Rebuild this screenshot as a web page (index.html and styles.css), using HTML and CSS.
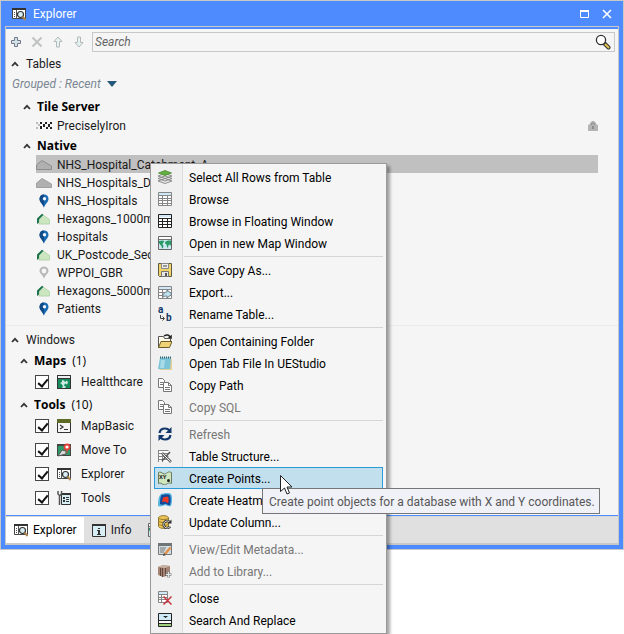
FILE: index.html
```html
<!DOCTYPE html>
<html lang="en">
  <head>
    <meta charset="UTF-8" />
    <meta name="viewport" content="width=device-width, initial-scale=1.0" />
    <title>Explorer</title>
    <link rel="stylesheet" href="styles.css">
  </head>
  <body>
    <!-- icons used more than once -->
    <svg class="sprite" aria-hidden="true">
      <symbol id="i-explorer" viewBox="0 0 14 14">
        <path d="M.5 1.500h13v10H.5z" fill="#fff" stroke="#444" />
        <path d="M0 1h14v2H0z" fill="#333" />
        <path d="M2 5.500h1M2 7.500h1M2 9.500h1M4.500 3v9" stroke="#555" />
        <circle cx="8.500" cy="7.500" r="3" fill="#d8eef5" stroke="#333" stroke-width="1.200" />
        <path d="M10.500 9.500l3 3.500" stroke="#a9824c" stroke-width="2" />
      </symbol>
      <symbol id="i-map" viewBox="0 0 14 14">
        <path d="M.5.500h13v13H.5z" fill="#cfe9f2" stroke="#666" />
        <path d="M1 1h12v2H1z" fill="#fff" />
        <path d="M1 3.500h12" stroke="#777" />
        <path d="M1 5l4-.5 1.500 1L5 7l-.5 1.500 1 1L5 12l-1 .5L3.500 10 2 8.500 1 7zM7.500 5.500L10 4.500h3v4L12 10l-.5-1.500-1 .5-.5 3-1-1-.5-2.500-1.500-1z" fill="#2b9a66" />
      </symbol>
      <symbol id="i-pin" viewBox="0 0 16 14">
        <path d="M8 .5C5 .5 3.500 2.500 3.500 5c0 3 3 4.500 4.500 8.500C9.500 9.500 12.500 8 12.500 5 12.500 2.500 11 .5 8 .5z" fill="#1c6bb5" />
        <path d="M8 .5C5 .5 3.500 2.500 3.500 5c0 3 3 4.500 4.500 8.500z" fill="#124a86" />
        <circle cx="8.500" cy="4.800" r="1.700" fill="#eef6ff" />
      </symbol>
      <symbol id="i-region" viewBox="0 0 16 14">
        <path d="M3 12V7l4-4 6.500 4.500V12z" fill="#cbe6c0" stroke="#b3d6aa" />
        <path d="M1 12V6.500L6 1.800l1.500 1L3 7.500v3z" fill="#1f7350" />
      </symbol>
      <symbol id="i-copy" viewBox="0 0 14 14">
        <path d="M.5.5h4l2 2v7h-6z" fill="#fff" stroke="#777" />
        <path d="M5.500 4.500h5l3 3v6h-8z" fill="#fff" stroke="#777" />
        <path d="M10.500 4.500v3h3M2 4.500h3M2 6.500h3M7 9.500h5M7 11.500h5" fill="none" stroke="#777" />
      </symbol>
      <symbol id="i-up" viewBox="0 0 8 6">
        <path d="M1 5l3-3.200L7 5" fill="none" stroke="#333" stroke-width="1.800" />
      </symbol>
    </svg>

    <div class="window">
      <header class="titlebar">
        <svg class="icon"><use href="#i-explorer" /></svg>
        <h1>Explorer</h1>
        <button class="win-btn" aria-label="Maximize">
          <svg width="10" height="10"><path d="M.5 1.500h8v7h-8z" fill="none" stroke="#fff" /><path d="M0 1h9v2H0z" fill="#fff" /></svg>
        </button>
        <button class="win-btn" aria-label="Close">
          <svg width="10" height="10"><path d="M1 1l8 8M9 1l-8 8" stroke="#fff" stroke-width="1.600" /></svg>
        </button>
      </header>

      <div class="frame">
        <main class="panel">
          <div class="toolbar">
            <button aria-label="Add"><svg width="12" height="12"><path d="M4.500 1.500h3v3h3v3h-3v3h-3v-3h-3v-3h3z" fill="#cfe3e6" stroke="#778" /></svg></button>
            <button aria-label="Remove"><svg width="12" height="12"><path d="M1.500 1.500l9 9M10.500 1.500l-9 9" stroke="#c0c2c2" stroke-width="2" /></svg></button>
            <button aria-label="Move up"><svg width="12" height="12"><path d="M6 1l4 4.500H7.500V11h-3V5.500H2z" fill="#e6f3f3" stroke="#b3b8b8" /></svg></button>
            <button aria-label="Move down"><svg width="12" height="12"><path d="M6 11l4-4.500H7.500V1h-3v5.500H2z" fill="#e6f3f3" stroke="#b3b8b8" /></svg></button>
            <div class="search">
              <input type="text" placeholder="Search" aria-label="Search" />
              <svg width="16" height="16" viewBox="0 0 16 16">
                <path d="M9.500 9.500l4 4" stroke="#333" stroke-width="4" stroke-linecap="round" />
                <path d="M10.500 10.500l3 3" stroke="#e4c34e" stroke-width="2" stroke-linecap="round" />
                <circle cx="6" cy="6" r="4.600" fill="#fff" stroke="#333" stroke-width="1.300" />
              </svg>
            </div>
          </div>

          <section class="tables">
            <h2 class="section-head"><svg class="up"><use href="#i-up" /></svg>Tables</h2>
            <button class="grouped">Grouped : Recent <svg width="10" height="6"><path d="M0 0h10L5 6z" fill="#24587c" /></svg></button>
            <h3 class="group-head"><svg class="up"><use href="#i-up" /></svg>Tile Server</h3>
            <ul class="rows">
              <li class="row">
                <svg class="icon-wide" viewBox="0 0 16 14">
                  <path d="M0 3h2v2H0zM2 5h2v2H2zM0 8h2v2H0z" fill="#bbb" />
                  <path d="M4 3h2v2H4zM4 7h2v3H4zM7 5h2v3H7zM9 3h2v2H9zM10 8h2v2h-2zM12 5h2v3h-2zM14 3h2v2h-2zM14 8h2v2h-2z" fill="#222" />
                </svg>
                PreciselyIron
                <svg class="lock" width="10" height="12"><path d="M0 5l2-1V3l2-2h2l2 2v1l2 1v6H0z" fill="#b4b4b4" /><path d="M3.500 5V4l1-1h1l1 1v1" fill="none" stroke="#888" /><path d="M4.500 6h1v3h-1z" fill="#666" /></svg>
              </li>
            </ul>
            <h3 class="group-head"><svg class="up"><use href="#i-up" /></svg>Native</h3>
            <ul class="rows">
              <li class="row selected"><svg class="icon-wide" viewBox="0 0 16 14"><path d="M.5 11.500V7L6 2.500 15.500 8v3.500z" fill="#b0b0b0" stroke="#8c8c8c" /></svg>NHS_Hospital_Catchment_A</li>
              <li class="row"><svg class="icon-wide" viewBox="0 0 16 14"><path d="M.5 11.500V7L6 2.500 15.500 8v3.500z" fill="#b0b0b0" stroke="#a0a0a0" /></svg>NHS_Hospitals_DT</li>
              <li class="row"><svg class="icon-wide"><use href="#i-pin" /></svg>NHS_Hospitals</li>
              <li class="row"><svg class="icon-wide"><use href="#i-region" /></svg>Hexagons_1000m</li>
              <li class="row"><svg class="icon-wide"><use href="#i-pin" /></svg>Hospitals</li>
              <li class="row"><svg class="icon-wide"><use href="#i-region" /></svg>UK_Postcode_Sect</li>
              <li class="row"><svg class="icon-wide" viewBox="0 0 16 14"><path d="M8 .500a4.500 4.500 0 0 0-4.500 4.500c0 2.500 3.500 3.500 4.500 8 1-4.500 4.500-5.500 4.500-8A4.500 4.500 0 0 0 8 .500z" fill="#b8b8b8" /><circle cx="8" cy="5" r="2.400" fill="#f5f5f5" /></svg>WPPOI_GBR</li>
              <li class="row"><svg class="icon-wide"><use href="#i-region" /></svg>Hexagons_5000m</li>
              <li class="row"><svg class="icon-wide"><use href="#i-pin" /></svg>Patients</li>
            </ul>
          </section>

          <section class="windows">
            <h2 class="section-head"><svg class="up"><use href="#i-up" /></svg>Windows</h2>
            <h3 class="window-head"><svg class="up"><use href="#i-up" /></svg>Maps <span>(1)</span></h3>
            <label class="check"><input type="checkbox" checked /><svg class="icon" viewBox="0 0 14 14"><path d="M0 0h14v14H0z" fill="#333" /><path d="M1 1h12v2H1z" fill="#eee" /><path d="M1 4h12v9H1z" fill="#178a5c" /><path d="M5 5l2 .5 1 1.500 2-1.500 1 2-1 2-2-1-1 2 2 1.500-1 1H5l1-2-1.500-2L3 8l2-1z" fill="#cdebe2" /></svg>Healtthcare</label>
            <h3 class="window-head"><svg class="up"><use href="#i-up" /></svg>Tools <span>(10)</span></h3>
            <label class="check"><input type="checkbox" checked /><svg class="icon" viewBox="0 0 14 14"><path d="M.5.5h13v13H.5z" fill="#f5f5f5" stroke="#333" /><path d="M0 0h14v4H0z" fill="#5d6b25" /><path d="M3 6l3 2-3 2M7 10.500h4" fill="none" stroke="#333" stroke-width="1.200" /></svg>MapBasic</label>
            <label class="check"><input type="checkbox" checked /><svg class="icon" viewBox="0 0 14 14"><path d="M0 1h14v12H0z" fill="#444" /><path d="M1 3h12v9H1z" fill="#2b9a66" /><path d="M1 13l4-6 4 1v3l-4 1z" fill="#d8d8d8" stroke="#555" /><circle cx="10" cy="4" r="2.500" fill="#fff" stroke="#e04038" stroke-width="1.800" /><path d="M10 7v3" stroke="#e04038" /></svg>Move To</label>
            <label class="check"><input type="checkbox" checked /><svg class="icon"><use href="#i-explorer" /></svg>Explorer</label>
            <label class="check"><input type="checkbox" checked /><svg class="icon" viewBox="0 0 14 14"><path d="M4.500 2.500h9v11h-9z" fill="#d8eef5" stroke="#333" /><path d="M5 2h9v2H5zM6 6h2v2H6zM6 9h2v2H6zM9 6h3v1H9zM9 8h3v1H9zM9 10h3v1H9z" fill="#333" /><path d="M1 0v3l1.500 1.500V14M4.500 0v3L3 4.500" fill="none" stroke="#555" stroke-width="1.500" /></svg>Tools</label>
            <div class="check"><input type="checkbox" aria-label="Info" /><svg class="icon" viewBox="0 0 14 14"><path d="M.5.5h13v13H.5z" fill="#fff" stroke="#333" /></svg></div>
          </section>
        </main>

        <nav class="tabs">
          <button class="tab active"><svg class="icon"><use href="#i-explorer" /></svg>Explorer</button>
          <button class="tab"><svg class="icon" viewBox="0 0 14 14"><path d="M.5 1.500h13v12H.5z" fill="#d8eef5" stroke="#333" /><path d="M0 1h14v2H0zM6 5h2v1H6zM5 7h3v4h1v1H5v-1h1V8H5z" fill="#333" /></svg>Info</button>
          <button class="tab" aria-label="Move To"><svg class="icon"><use href="#i-map" /></svg></button>
        </nav>
      </div>
    </div>

    <div class="menu" role="menu">
      <button role="menuitem">
        <svg class="icon" viewBox="0 0 14 14"><path d="M0 11l7-2.500 7 2.500-7 2.500zM0 8.500L7 6l7 2.500L7 11zM0 6l7-2.500L14 6 7 8.500z" fill="#e8e8e8" stroke="#777" stroke-width=".8" /><path d="M.5 3L7 .5 13.500 3 7 5.500z" fill="#64b044" stroke="#478a30" stroke-width=".8" /></svg>Select All Rows from Table</button>
      <button role="menuitem">
        <svg class="icon" viewBox="0 0 14 14"><path d="M.5.5h13v13H.5z" fill="#fff" /><path d="M1 1h12v2H1z" fill="#cfeaf6" /><path d="M.5.5h13v13H.5zM0 3.500h14M0 6.500h14M0 8.500h14M0 11.500h14M4.500 3v11M9.500 3v11" fill="none" stroke="#858585" /></svg>Browse</button>
      <button role="menuitem">
        <svg class="icon" viewBox="0 0 14 14"><path d="M.5.5h13v13H.5z" fill="#fff" /><path d="M1 1h12v2H1z" fill="#cfeaf6" /><path d="M.5.5h13v13H.5zM0 4.500h14M0 7.500h14M0 10.500h14M4.500 4v10M9.500 4v10" fill="none" stroke="#222" /></svg>Browse in Floating Window</button>
      <button role="menuitem"><svg class="icon"><use href="#i-map" /></svg>Open in new Map Window</button>
      <hr />
      <button role="menuitem">
        <svg class="icon" viewBox="0 0 14 14"><path d="M.5.5h13v13h-12l-1-1z" fill="#f0d468" stroke="#5f5a45" /><path d="M3.500.5h7v5h-7z" fill="#eee" stroke="#888" /><path d="M5 2h4v2H5z" fill="#999" /><path d="M3.500 8.500h7v5h-7z" fill="#e6e6e6" stroke="#777" /><path d="M7 10h2v3H7z" fill="#555" /></svg>Save Copy As...</button>
      <button role="menuitem">
        <svg class="icon" viewBox="0 0 14 14"><path d="M.5 1.500h13v12H.5z" fill="#fff" /><path d="M1 2h12v2H1z" fill="#cfeaf6" /><path d="M.5 1.500h13v12H.5zM0 4.500h14M0 7.500h14M0 10.500h14M4.500 4v10" fill="none" stroke="#858585" /><path d="M5 12c0-4 2-5 4-5V5l5 4-5 4v-2c-1 0-2 0-4 1z" fill="#bfe2f0" stroke="#6b7b83" /></svg>Export...</button>
      <button role="menuitem">
        <svg class="icon" viewBox="0 0 14 14"><text class="glyph" x="0" y="6">a</text><text class="glyph" x="8" y="14">b</text><path d="M2.500 8v3.500H6M4.500 9.500l2 2-2 2" fill="none" stroke="#444" /></svg>Rename Table...</button>
      <hr />
      <button role="menuitem">
        <svg class="icon" viewBox="0 0 14 14"><path d="M.5 13.500v-11h5l1 2h6v3" fill="#fffbe6" stroke="#555" /><path d="M.5 13.500L3 7.500h11l-2.500 6z" fill="#f0d277" stroke="#6d5b25" /><path d="M6 2c3-2 5-1 6 1" fill="none" stroke="#222" stroke-width="1.500" /><path d="M13.800.8V5L10 3.500z" fill="#222" /></svg>Open Containing Folder</button>
      <button role="menuitem">
        <svg class="icon" viewBox="0 0 14 14"><path d="M12 2l2 1v11H1" fill="#e3cf9a" /><path d="M2 1.500h11L12 13H0z" fill="#7cc4d8" /><path d="M3 4h4l-1 8H2z" fill="#a8dbe8" /><path d="M2 1.500h11" stroke="#35606e" stroke-width="2" stroke-dasharray="1 1" /></svg>Open Tab File In UEStudio</button>
      <button role="menuitem"><svg class="icon"><use href="#i-copy" /></svg>Copy Path</button>
      <button role="menuitem" disabled><svg class="icon"><use href="#i-copy" /></svg>Copy SQL</button>
      <hr />
      <button role="menuitem" disabled>
        <svg class="icon" viewBox="0 0 14 14"><path d="M1.500 6C2 3 4.500 1.500 7 1.500c2 0 3.500.8 4.500 2M12.500 8c-.5 3-3 4.500-5.500 4.500-2 0-3.500-.8-4.500-2" fill="none" stroke="#12386b" stroke-width="2.200" /><path d="M13.500 0v6h-6zM.5 14V8h6z" fill="#12386b" /></svg>Refresh</button>
      <button role="menuitem">
        <svg class="icon" viewBox="0 0 14 14"><path d="M.5 1.500h10v11H.5z" fill="#fff" /><path d="M.5 1.500h10M.5 4.500h10M.5 7.500h10M.5 10.500h10M.5 1v12M4.500 4v9" stroke="#858585" /><path d="M4 4l9 9" stroke="#666" stroke-width="2.500" /><path d="M12 3l-8 9" stroke="#555" stroke-width="1.500" /><path d="M4.500 4.500l8 8" stroke="#eee" /></svg>Table Structure...</button>
      <button role="menuitem" class="hover">
        <svg class="icon" viewBox="0 0 14 14"><path d="M.5 1.500c2-1 3 0 4.500 1s3 0 4.500-1 2.500-.5 4 0v11c-1.500-.5-2.500-1-4 0s-3 2-4.500 1-2.500-2-4.500-1z" fill="#cfe6bd" stroke="#6c7b62" /><text class="xy" x="1" y="8">XY</text><circle cx="10.500" cy="9.500" r="1.500" fill="#222" /></svg>Create Points...</button>
      <button role="menuitem">
        <svg class="icon" viewBox="0 0 14 14"><path d="M3 1c3-1 8-2 10 0 2 3 1 9 0 12-3 1-4-1-6-1-2 1-5 2-7 1 0-4 0-9 3-12z" fill="#58b8e0" /><path d="M4 2c3-1 6-1 8 0 1 3 1 7 0 10-2 1-4-2-5-1-2 1-4 1-5 0 0-3 0-7 2-10z" fill="#12499a" /><path d="M5 4.500l4-1 1.500 1v5L9 10 7.500 8.500 4 9z" fill="#ee3a24" /></svg>Create Heatmap...</button>
      <button role="menuitem">
        <svg class="icon" viewBox="0 0 14 14"><path d="M.5 2.500C2 0 9 0 10.500 2.500v9C9 14 2 14 .5 11.500z" fill="#ecc558" stroke="#8f762c" /><path d="M.5 3c2 2 8 2 10 0M.5 6c2 2 8 2 10 0M.5 9c2 2 8 2 10 0" fill="none" stroke="#9a7c28" /><path d="M12 11.500a3.500 3.500 0 1 1 0-4" fill="none" stroke="#333" stroke-width="2.500" /><path d="M12 11.500a3.500 3.500 0 1 1 0-4" fill="none" stroke="#ddd" /><path d="M13.500 4.500v4H9.500z" fill="#333" /></svg>Update Column...</button>
      <hr />
      <button role="menuitem" disabled>
        <svg class="icon" viewBox="0 0 14 14"><path d="M.5 1.500h13v11H.5z" fill="#d2dde1" stroke="#777" /><path d="M0 1h14v3H0z" fill="#6f7679" /><path d="M2 6h6M2 8h5M2 10h4" stroke="#777" /><path d="M6.500 12.500l6-7" stroke="#e0904a" stroke-width="2.500" /><path d="M5 14l1-3 2 2z" fill="#444" /></svg>View/Edit Metadata...</button>
      <button role="menuitem" disabled>
        <svg class="icon" viewBox="0 0 14 14"><path d="M0 3l5-2 7 1v9l-7 2-5-2z" fill="#a58473" /><path d="M0 3l5-2 7 1-5 2z" fill="#c9b3a6" /><path d="M2.500 4v8M4.500 4v9M7.500 4v8" stroke="#5f463a" /><path d="M10.500 7.500v6M7.500 10.500h6" stroke="#888" stroke-width="2.500" /><path d="M10.500 8v5M8 10.500h5" stroke="#dfe9ee" /></svg>Add to Library...</button>
      <hr />
      <button role="menuitem">
        <svg class="icon" viewBox="0 0 14 14"><path d="M.5.5h9v11h-9z" fill="#fff" /><path d="M1 1h9v2H1z" fill="#cfeaf6" /><path d="M.5.5h9v11h-9zM0 3.500h10M0 6.500h10M0 8.500h10M3.500 3v9" fill="none" stroke="#858585" /><path d="M5.500 5.500l8 8M13.500 5.500l-8 8" stroke="#c8323c" stroke-width="1.500" /></svg>Close</button>
      <button role="menuitem">
        <svg class="icon" viewBox="0 0 14 14"><path d="M.5.500h13v13H.5z" fill="#fff" /><path d="M1 1h12v6H1z" fill="#cfeaf6" /><path d="M1 11h12v2H1z" fill="#9ed080" /><path d="M.5.500h13v13H.5zM0 7.500h14M0 10.500h14" fill="none" stroke="#222" /><path d="M5 3h5L7.500 5z" fill="#222" /></svg>Search And Replace</button>
    </div>

    <div class="tooltip" role="tooltip">Create point objects for a database with X and Y coordinates.</div>
    <svg class="cursor" width="13" height="20"><path d="M.5.500v16l4-3.500 2.500 6 2.500-1-2.500-6h5z" fill="#fff" stroke="#222" /></svg>
  </body>
</html>
```
FILE: styles.css
```css
* {
  box-sizing: border-box;
  margin: 0;
  padding: 0;
}
body {
  position: relative;
  min-height: 100vh;
  background: #fff;
  color: #1a1a1a;
  font-family: Roboto, "Noto Sans", sans-serif;
  font-size: 12px;
  line-height: 18px;
}
button,
input {
  border: none;
  background: none;
  color: inherit;
  font: inherit;
}
ul {
  list-style: none;
}
h1,
h2,
h3 {
  font-size: 12px;
  font-weight: normal;
}
.sprite {
  position: absolute;
  width: 0;
  height: 0;
}
.icon {
  flex: none;
  width: 14px;
  height: 14px;
}
.icon-wide {
  flex: none;
  width: 16px;
  height: 14px;
}

/* window */
.window {
  display: flex;
  flex-direction: column;
  height: calc(100vh - 84px);
  border: 1px solid #c8c8c8;
  background: #4d8bff;
}
.titlebar {
  display: flex;
  align-items: center;
  height: 25px;
  padding: 0 11px;
  gap: 7px;
  color: #fff;
}
.titlebar h1 {
  flex: 1;
}
.win-btn {
  display: flex;
  margin-left: 5px;
}
.frame {
  display: flex;
  flex: 1;
  flex-direction: column;
  min-height: 0;
  margin: 0 4px 4px;
  border: 1px solid #c8c8c8;
  border-bottom: none;
}
.panel {
  flex: 1;
  min-height: 0;
  overflow: hidden;
  padding: 3px 0 0;
  border-top: 2px solid #4d8bff;
  border-bottom: 1px solid #4d8bff;
  background: #f5f5f5;
}
.toolbar {
  display: flex;
  align-items: center;
  gap: 9px;
  padding: 0 3px 0 4px;
}
.toolbar button {
  display: flex;
}
.search {
  display: flex;
  flex: 1;
  align-items: center;
  height: 20px;
  margin-left: -2px;
  padding: 0 3px 0 2px;
  border: 1px solid #c8c8c8;
}
.search input {
  flex: 1;
  min-width: 0;
  outline: none;
  font-style: italic;
}
.search input::placeholder {
  color: #666;
}

/* tree */
.up {
  flex: none;
  width: 8px;
  height: 6px;
}
.section-head,
.group-head,
.window-head {
  display: flex;
  align-items: center;
  gap: 6px;
  height: 20px;
}
.section-head {
  gap: 7px;
  padding-left: 5px;
}
.tables {
  padding-top: 2px;
}
.grouped {
  display: flex;
  align-items: center;
  gap: 6px;
  height: 20px;
  margin-bottom: 2px;
  padding-left: 6px;
  color: #7b8792;
  font-style: italic;
}
.group-head {
  padding: 2px 0 0 17px;
  color: #000;
  font-family: "Open Sans", "Noto Sans", sans-serif;
  font-weight: bold;
}
.rows {
  margin: 0 20px 1px 30px;
}
.row {
  display: flex;
  align-items: center;
  gap: 5px;
  height: 18px;
  padding-top: 1px;
}
.row.selected {
  background: #c0c0c0;
}
.lock {
  margin-left: auto;
}
.windows {
  margin-top: 8px;
  padding-top: 4px;
  border-top: 1px solid #ececec;
}
.window-head {
  padding: 1px 0 0 14px;
  color: #000;
  font-family: "Open Sans", "Noto Sans", sans-serif;
  font-weight: bold;
}
.window-head span {
  font-weight: normal;
}
.check {
  display: flex;
  align-items: center;
  height: 24px;
  padding-left: 29px;
}
.check .icon {
  margin: 0 10px 0 8px;
}
.check input {
  position: relative;
  width: 14px;
  height: 14px;
  border: 1px solid #444;
  background: #fff;
  appearance: none;
}
.check input:checked::after {
  content: "";
  position: absolute;
  top: 1px;
  left: 4px;
  width: 4px;
  height: 8px;
  border: solid #111;
  border-width: 0 2px 2px 0;
  transform: rotate(40deg);
}

/* tabs */
.tabs {
  display: flex;
  height: 29px;
  border-top: 1px solid #d8d8d8;
  border-bottom: 2px solid #c8c8c8;
  background: #e0e0e0;
}
.tab {
  display: flex;
  align-items: center;
  gap: 5px;
  padding: 0 8px;
}
.tab.active {
  padding-right: 7px;
  background: #fff;
  color: #000;
}

/* context menu */
.menu {
  position: absolute;
  top: 163px;
  left: 150px;
  width: 237px;
  padding: 2px 3px;
  border: 1px solid #999;
  background: linear-gradient(to right, #f0f0f0 31px, #dcdcdc 31px, #dcdcdc 32px, #f5f5f5 32px);
  box-shadow: 3px 3px 3px rgba(0, 0, 0, 0.35);
  color: #000;
}
.menu button {
  display: flex;
  align-items: center;
  gap: 17px;
  width: 100%;
  height: 22px;
  padding: 2px 0 0 3px;
  border: 1px solid transparent;
  white-space: nowrap;
}
.menu .icon {
  margin-bottom: 2px;
}
.menu button:disabled {
  color: #777;
}
.menu .hover {
  border-color: #2a9bd8;
  background: #c2dfee;
}
.menu hr {
  height: 1px;
  margin: 2px 0 2px 30px;
  border: none;
  background: #d5d5d5;
}
.glyph {
  fill: #12386b;
  font-size: 10px;
  font-weight: bold;
}
.xy {
  fill: #222;
  font-size: 6px;
  font-weight: bold;
}
.tooltip {
  position: absolute;
  top: 488px;
  left: 262px;
  padding: 4px 4px 2px 6px;
  border: 1px solid #767676;
  background: #f1f1f8;
  color: #575757;
  white-space: nowrap;
}
.cursor {
  position: absolute;
  top: 475px;
  left: 280px;
}
```
